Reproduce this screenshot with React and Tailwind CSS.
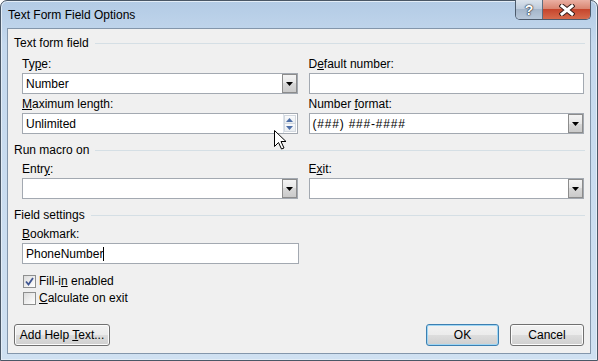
const fontStack = "font-['Liberation_Sans',Arial,sans-serif]"

const Mn = ({ text, at }) => {
  const i = text.indexOf(at)
  return (
    <span className="whitespace-pre">
      {text.slice(0, i)}
      <u className="underline-offset-[1px]">{text[i]}</u>
      {text.slice(i + 1)}
    </span>
  )
}

const GroupHeader = ({ title, className = '' }) => (
  <div className={`flex items-center h-[14px] pl-[6px] pr-[5px] ${className}`}>
    <span className="leading-[14px]">{title}</span>
    <div className="flex-1 ml-[6px] border-t border-[#d5dfe5]"></div>
  </div>
)

const Label = ({ text, at, className = '' }) => (
  <div className={`h-[14px] leading-[14px] ${className}`}>
    <Mn text={text} at={at} />
  </div>
)

const DropButton = () => (
  <div className="w-[15px] h-full border border-[#8c8c8c] bg-[linear-gradient(#f4f4f4,#e6e6e6_50%,#d8d8d8_50%,#cacaca)] flex items-center justify-center">
    <svg width="7" height="4" viewBox="0 0 7 4">
      <path d="M0 0H7L3.5 4Z" fill="#000" />
    </svg>
  </div>
)

const Spinner = () => (
  <div className="w-[14px] h-full flex flex-col border-l border-[#dde3ea] py-[1px] pr-[1px]">
    <div className="flex-1 flex items-center justify-center border border-[#d2d8df] bg-[linear-gradient(#fafbfc,#e9edf1)]">
      <svg width="7" height="4" viewBox="0 0 7 4">
        <path d="M3.5 0L7 4H0Z" fill="#4d6fa8" />
      </svg>
    </div>
    <div className="flex-1 flex items-center justify-center border border-t-0 border-[#d2d8df] bg-[linear-gradient(#fafbfc,#e9edf1)]">
      <svg width="7" height="4" viewBox="0 0 7 4">
        <path d="M0 0H7L3.5 4Z" fill="#4d6fa8" />
      </svg>
    </div>
  </div>
)

const Box = ({ value, right, className = '', children }) => (
  <div className={`h-[21px] border border-[#a3a9b1] bg-white flex items-stretch ${className}`}>
    <div className="flex-1 flex items-center pl-[3px] leading-[14px] whitespace-nowrap">
      {value}
      {children}
    </div>
    {right}
  </div>
)

const Checkbox = ({ checked, text, at, className = '' }) => (
  <div className={`h-[16px] flex items-center pl-[15px] ${className}`}>
    <div className="w-[13px] h-[13px] border border-[#8e8f8f] bg-[linear-gradient(135deg,#dcdcdc,#ffffff)] flex items-center justify-center">
      {checked && (
        <svg width="9" height="9" viewBox="0 0 9 9">
          <path d="M1 4.5L3.5 7.5L8 1" fill="none" stroke="#3f5591" strokeWidth="1.8" />
        </svg>
      )}
    </div>
    <span className="ml-[3px] leading-[14px]">
      <Mn text={text} at={at} />
    </span>
  </div>
)

const Button = ({ children, primary, className = '' }) => (
  <div
    className={`h-[22px] rounded-[3px] border flex items-center justify-center bg-[linear-gradient(#f2f2f2,#ebebeb_50%,#dddddd_50%,#cfcfcf)] ${
      primary ? 'border-[#3c7fb1] shadow-[inset_0_0_0_1px_#9fd6f4]' : 'border-[#707070] shadow-[inset_0_0_0_1px_#fcfcfc]'
    } ${className}`}
  >
    {children}
  </div>
)

const Cursor = () => (
  <svg className="absolute left-[274px] top-[130px]" width="13" height="20" viewBox="0 0 13 20">
    <path
      d="M0.5 0.5V16.5L4.5 12.5L7.5 19L10 18L7 11.5H12Z"
      fill="#fff"
      stroke="#000"
      strokeWidth="1"
      strokeLinejoin="miter"
    />
  </svg>
)

export default function App() {
  return (
    <div className={`relative w-[598px] h-[361px] text-[12px] text-black ${fontStack}`}>
      <div className="w-full h-full flex flex-col rounded-t-[7px] border border-[#4a5766] bg-[linear-gradient(#b3cbe5,#c5d9ee_12%,#cfe0f1)] shadow-[inset_0_0_0_1px_#e3edf7]">
        <div className="h-[27px] flex items-center">
          <span className="pl-[7px] text-[12px] leading-[14px] text-black">Text Form Field Options</span>
          <div className="ml-auto mr-[6px] self-start -mt-[1px] flex h-[20px] border border-[#4d5b6c] border-t-0 rounded-b-[5px] overflow-hidden">
            <div className="w-[27px] h-full flex items-center justify-center bg-[linear-gradient(#dbe3ec,#bccadb_50%,#a5b6ca_50%,#b8c8da)] border-r border-[#5e6e80]">
              <span className="font-bold text-[14px] leading-[14px] text-white [text-shadow:0_0_1px_#27313d,0_0_1px_#27313d,0_0_2px_#27313d]">
                ?
              </span>
            </div>
            <div className="w-[47px] h-full flex items-center justify-center bg-[linear-gradient(#eab0a3,#d98672_45%,#c6462d_50%,#d66b4d)]">
              <svg width="16" height="12" viewBox="0 0 16 12">
                <path d="M3 2L13 10M13 2L3 10" stroke="#3a1f1a" strokeWidth="5" strokeLinecap="square" />
                <path d="M3 2L13 10M13 2L3 10" stroke="#ffffff" strokeWidth="3" strokeLinecap="square" />
              </svg>
            </div>
          </div>
        </div>

        <div className="flex-1 mx-[6px] mb-[6px] border border-[#8396ab] bg-[#f0f0f0] flex flex-col pt-[7px]">
          <GroupHeader title="Text form field" />

          <div className="grid grid-cols-2 gap-x-[11px] pl-[14px] pr-[6px]">
            <div className="flex flex-col">
              <Label text="Type:" at="p" className="mt-[7px]" />
              <Box value="Number" right={<DropButton />} className="mt-[2px]" />
              <Label text="Maximum length:" at="M" className="mt-[3px]" />
              <Box value="Unlimited" right={<Spinner />} className="mt-[2px]" />
            </div>
            <div className="flex flex-col">
              <Label text="Default number:" at="e" className="mt-[7px]" />
              <Box value="" className="mt-[2px]" />
              <Label text="Number format:" at="f" className="mt-[3px]" />
              <Box
                value={<span className="tracking-[0.8px]">(###) ###-####</span>}
                right={<DropButton />}
                className="mt-[2px]"
              />
            </div>
          </div>

          <GroupHeader title="Run macro on" className="mt-[9px]" />

          <div className="grid grid-cols-2 gap-x-[11px] pl-[14px] pr-[6px]">
            <div className="flex flex-col">
              <Label text="Entry:" at="y" className="mt-[5px]" />
              <Box value="" right={<DropButton />} className="mt-[2px]" />
            </div>
            <div className="flex flex-col">
              <Label text="Exit:" at="x" className="mt-[5px]" />
              <Box value="" right={<DropButton />} className="mt-[2px]" />
            </div>
          </div>

          <GroupHeader title="Field settings" className="mt-[9px]" />

          <div className="grid grid-cols-2 gap-x-[11px] pl-[14px] pr-[6px]">
            <div className="flex flex-col">
              <Label text="Bookmark:" at="B" className="mt-[5px]" />
              <Box value="PhoneNumber" className="mt-[2px] w-[277px]">
                <span className="w-px h-[14px] bg-black"></span>
              </Box>
            </div>
          </div>

          <Checkbox checked text="Fill-in enabled" at="n" className="mt-[9px]" />
          <Checkbox text="Calculate on exit" at="C" className="mt-[1px]" />

          <div className="mt-auto flex items-center pl-[6px] pr-[6px] pb-[7px]">
            <Button className="w-[96px]">
              <Mn text="Add Help Text..." at="T" />
            </Button>
            <Button primary className="ml-auto w-[73px]">OK</Button>
            <Button className="ml-[11px] w-[74px]">Cancel</Button>
          </div>
        </div>
      </div>
      <Cursor />
    </div>
  )
}
